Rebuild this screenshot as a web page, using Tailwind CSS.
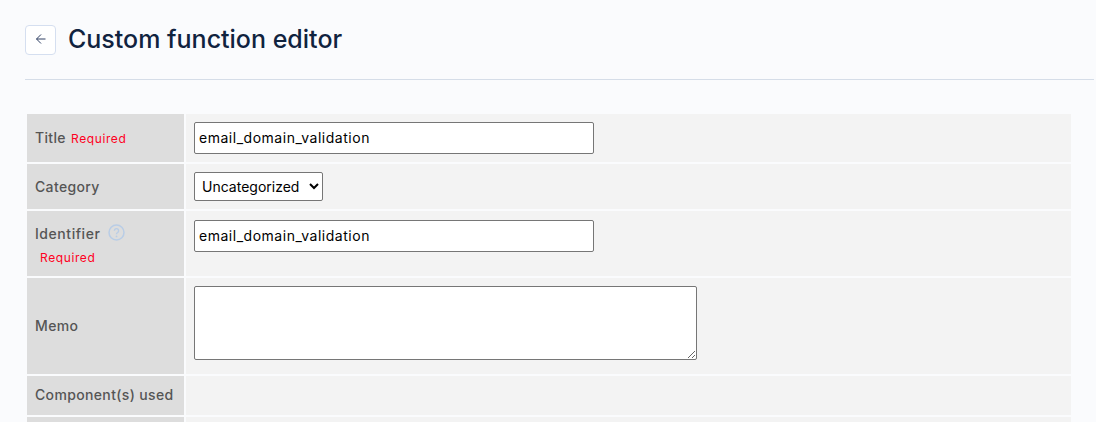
<!DOCTYPE html>
<html lang="en">
<head>
<meta charset="utf-8">
<title>Custom function editor</title>
<script src="https://cdn.jsdelivr.net/npm/@tailwindcss/browser@4"></script>
</head>
<body class="h-[422px] overflow-hidden bg-[#fafbfd] font-['Inter','Noto_Sans',sans-serif]">
  <header class="ml-[25px] mr-[2px] h-[80px] border-b border-[#d5dde8] pt-[25px]">
    <div class="flex items-center gap-[12px]">
      <button class="flex h-[30px] w-[31px] items-center justify-center rounded-[4px] border border-[#d5dff0] bg-white">
        <svg class="mt-[-2px] h-[12px] w-[12px] text-[#2f3f63]" viewBox="0 0 12 12" fill="none" stroke="currentColor" stroke-width="1"><path d="M10.5 6H1.5M6 1.5 1.5 6 6 10.500"/></svg>
      </button>
      <h1 class="mt-[-2px] text-[25px] leading-[30px] font-medium text-[#10233f]">Custom function editor</h1>
    </div>
  </header>
  <table class="mt-[32px] ml-[25px] w-[1048px] table-fixed border-separate border-spacing-[2px] text-[14px] tracking-[0.35px] text-[#555]">
    <colgroup><col class="w-[157px]"><col></colgroup>
    <tbody>
      <tr class="h-[48px]">
        <th class="bg-[#ddd] pb-[2px] pl-[8px] text-left font-medium">Title <span class="ml-[1px] text-[12px] font-normal tracking-[0.6px] text-[#ff0022]">Required</span></th>
        <td class="bg-[#f3f3f3] pl-[8px] align-middle"><input class="block h-[32px] w-[400px] rounded-[2px] border border-[#767676] bg-white px-[4px] pb-[2px] text-[14px] tracking-[0.52px] text-black" value="email_domain_validation"></td>
      </tr>
      <tr class="h-[45px]">
        <th class="bg-[#ddd] pl-[8px] text-left font-medium">Category</th>
        <td class="bg-[#f3f3f3] pl-[8px]">
          <select class="block h-[29px] w-[129px] rounded-[2px] border border-[#767676] bg-white pl-[3px] text-[14px] tracking-normal text-black appearance-auto"><option>Uncategorized</option></select>
        </td>
      </tr>
      <tr class="h-[65px]">
        <th class="bg-[#ddd] pl-[8px] text-left align-top font-medium">
          <div class="mt-[14px] flex items-center gap-[8px] leading-[18px] tracking-[0.55px]">Identifier
            <svg class="mt-[-4px] h-[17px] w-[17px] text-[#b9cde6]" viewBox="0 0 17 17" fill="none" stroke="currentColor"><circle cx="8.500" cy="8.500" r="7.500" stroke-width="1.500"/><path d="M6.400 6.700a2.100 2.100 0 1 1 3.200 1.800c-.7.4-1.100.8-1.100 1.700" stroke-width="1.400"/><circle cx="8.500" cy="12.400" r=".9" fill="currentColor" stroke="none"/></svg>
          </div>
          <div class="mt-[7px] ml-[5px] text-[12px] leading-[16px] font-normal tracking-[0.6px] text-[#ff0022]">Required</div>
        </th>
        <td class="bg-[#f3f3f3] pt-[9px] pl-[8px] align-top"><input class="block h-[32px] w-[400px] rounded-[2px] border border-[#767676] bg-white px-[4px] pb-[2px] text-[14px] tracking-[0.52px] text-black" value="email_domain_validation"></td>
      </tr>
      <tr class="h-[96px]">
        <th class="bg-[#ddd] pb-[2px] pl-[8px] text-left font-medium">Memo</th>
        <td class="bg-[#f3f3f3] pt-[8px] pl-[8px] align-top"><textarea class="block h-[74px] w-[503px] resize-y rounded-[2px] border border-[#767676] bg-white"></textarea></td>
      </tr>
      <tr class="h-[39px]">
        <th class="bg-[#ddd] pb-[2px] pl-[8px] text-left font-medium">Component(s) used</th>
        <td class="bg-[#f3f3f3]"></td>
      </tr>
      <tr class="h-[39px]">
        <th class="bg-[#ddd]"></th>
        <td class="bg-[#f3f3f3]"></td>
      </tr>
    </tbody>
  </table>
</body>
</html>
